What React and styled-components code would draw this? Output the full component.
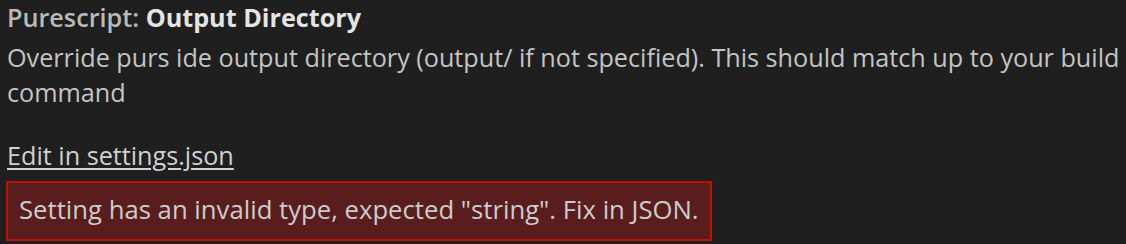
import React from 'react';
import styled, { createGlobalStyle } from 'styled-components';

const GlobalStyle = createGlobalStyle`
    html, body {
        margin: 0;
        padding: 0;
        background-color: #1f1f1f;
    }
    body {
        font-family: "Open Sans", "Noto Sans", sans-serif;
    }
`

const SettingItem = styled.div`
    width: 1126px;
    height: 244px;
    box-sizing: border-box;
    padding: 0 0 0 7px;
    font-size: 25.2px;
    line-height: 34px;
    color: #cccccc;
    overflow: hidden;
`

const Title = styled.div`
    height: 34px;
    white-space: nowrap;
`

const Category = styled.span`
    font-weight: 600;
    color: #b9b9b9;
`

const Label = styled.span`
    font-weight: 700;
    color: #e4e4e4;
`

const Description = styled.div`
    margin-top: 6px;
    line-height: 35px;
    color: #c4c4c4;
`

const LinkRow = styled.div`
    margin-top: 28px;
`

const EditLink = styled.a`
    color: #d0d0d0;
    text-decoration: underline;
    text-underline-offset: 3px;
    text-decoration-thickness: 2px;
    cursor: pointer;
`

const ValidationMessage = styled.div`
    width: fit-content;
    margin-top: 9px;
    margin-left: -1px;
    padding: 10px 11px 12px 11px;
    font-size: 25.7px;
    background-color: #5a1d1d;
    border: 2px solid #be1100;
    color: #cccccc;
`

const App = () => {
    return (
        <>
            <GlobalStyle />
            <SettingItem>
                <Title>
                    <Category>Purescript: </Category>
                    <Label>Output Directory</Label>
                </Title>
                <Description>
                    Override purs ide output directory (output/ if not specified). This should match up to your build command
                </Description>
                <LinkRow>
                    <EditLink>Edit in settings.json</EditLink>
                </LinkRow>
                <ValidationMessage>
                    Setting has an invalid type, expected "string". Fix in JSON.
                </ValidationMessage>
            </SettingItem>
        </>
    )
}

export default App;
